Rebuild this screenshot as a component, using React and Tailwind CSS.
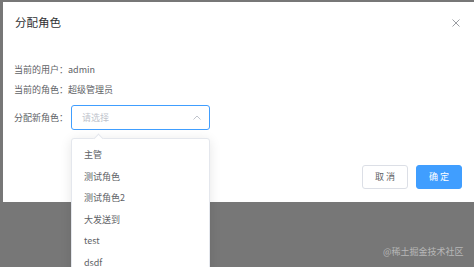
export default function App() {
  const roles = ["主管", "测试角色", "测试角色2", "大发送到", "test", "dsdf"]

  return (
    <div className="relative h-[267px] w-[474px] overflow-hidden bg-[#777777] font-['Noto_Sans_CJK_SC','Noto_Sans',sans-serif]">
      <div className="ml-[3px] mt-[2px] flex h-[200px] flex-col bg-white">
        <div className="flex h-[40px] items-start justify-between pl-[12px] pr-[14px] pt-[12px]">
          <span className="text-[11.5px] leading-[17px] text-[#303133]">分配角色</span>
          <svg width="8" height="8" viewBox="0 0 8 8" className="mt-[5px]">
            <path d="M0.5 0.5 L7.5 7.5 M7.5 0.5 L0.5 7.5" stroke="#909399" strokeWidth="0.9" />
          </svg>
        </div>

        <div className="flex flex-col pl-[11px] pt-[21px] text-[9px] text-[#606266]">
          <div className="leading-[14px]">当前的用户：admin</div>
          <div className="mt-[6px] leading-[14px]">当前的角色：超级管理员</div>
          <div className="mt-[8px] flex h-[25px] items-center">
            <span className="w-[57px] leading-[14px]">分配新角色：</span>
            <div className="flex h-[25px] w-[139px] items-center justify-between rounded-[3px] border border-[#409eff] pl-[10px] pr-[8px]">
              <span className="text-[#c0c4cc]">请选择</span>
              <svg width="8" height="5" viewBox="0 0 8 5">
                <path d="M0.5 4.5 L4 1 L7.5 4.5" fill="none" stroke="#c0c4cc" strokeWidth="1" />
              </svg>
            </div>
          </div>
        </div>

        <div className="mt-[35px] flex justify-end gap-[8px] pr-[12px]">
          <button className="h-[24px] w-[46px] rounded-[3px] border border-[#dcdfe6] bg-white pl-[2px] text-[9px] tracking-[2px] text-[#606266]">取消</button>
          <button className="h-[24px] w-[46px] rounded-[3px] border border-[#409eff] bg-[#409eff] pl-[2px] text-[9px] tracking-[2px] text-white">确定</button>
        </div>
      </div>

      <div className="absolute left-[71px] top-[138px] w-[139px] rounded-t-[3px] border border-[#e4e7ed] bg-white pt-[5px] shadow-[0_2px_12px_rgba(0,0,0,0.1)]">
        <div className="absolute left-[23px] top-[-4px] h-[7px] w-[7px] rotate-45 border-l border-t border-[#e4e7ed] bg-white" />
        {roles.map(r => (
          <div key={r} className="flex h-[21.5px] items-center px-[12px] text-[9px] text-[#606266]">{r}</div>
        ))}
        <div className="h-[10px]" />
      </div>

      <div className="absolute left-[383px] top-[245px] text-[9px] leading-[14px] text-[#b8b8b8]">@稀土掘金技术社区</div>
    </div>
  )
}
